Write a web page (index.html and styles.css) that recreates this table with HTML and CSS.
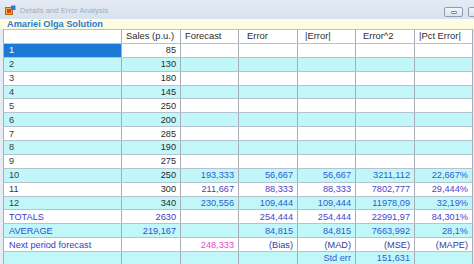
FILE: index.html
```html
<!DOCTYPE html>
<html>
<head>
<meta charset="utf-8">
<link rel="stylesheet" href="styles.css">
</head>
<body>
<div class="window">
  <div class="titlebar">
    <svg class="appicon" width="11" height="10" viewBox="0 0 11 10">
      <rect x="0.5" y="2.5" width="7" height="7" fill="#f0b040" stroke="#b06a10"/>
      <rect x="2" y="4" width="4" height="4" fill="#e04020"/>
      <rect x="6" y="0.5" width="4.5" height="4.5" fill="#3a78d0"/>
    </svg>
    <span class="title">Details and Error Analysis</span>
    <div class="winbtns">
      <div class="wbtn"><span class="dash"></span></div>
      <div class="wbtn"></div>
    </div>
  </div>
  <div class="label">Amariei Olga Solution</div>
  <table class="grid">
    <colgroup>
      <col class="c0"><col class="c1"><col class="c2"><col class="c3"><col class="c4"><col class="c5"><col class="c6">
    </colgroup>
    <thead>
      <tr class="head">
        <th></th>
        <th class="r">Sales (p.u.)</th>
        <th class="l4">Forecast</th>
        <th class="l8">Error</th>
        <th class="l7">|Error|</th>
        <th class="l7">Error^2</th>
        <th class="l4">|Pct Error|</th>
      </tr>
    </thead>
    <tbody>
      <tr class="w"><td class="rh sel">1</td><td class="n">85</td><td></td><td></td><td></td><td></td><td></td></tr>
      <tr class="c"><td class="rh">2</td><td class="n">130</td><td></td><td></td><td></td><td></td><td></td></tr>
      <tr class="w"><td class="rh">3</td><td class="n">180</td><td></td><td></td><td></td><td></td><td></td></tr>
      <tr class="c"><td class="rh">4</td><td class="n">145</td><td></td><td></td><td></td><td></td><td></td></tr>
      <tr class="w"><td class="rh">5</td><td class="n">250</td><td></td><td></td><td></td><td></td><td></td></tr>
      <tr class="c"><td class="rh">6</td><td class="n">200</td><td></td><td></td><td></td><td></td><td></td></tr>
      <tr class="w"><td class="rh">7</td><td class="n">285</td><td></td><td></td><td></td><td></td><td></td></tr>
      <tr class="c"><td class="rh">8</td><td class="n">190</td><td></td><td></td><td></td><td></td><td></td></tr>
      <tr class="w"><td class="rh">9</td><td class="n">275</td><td></td><td></td><td></td><td></td><td></td></tr>
      <tr class="c"><td class="rh">10</td><td class="n">250</td><td class="n b">193,333</td><td class="n b">56,667</td><td class="n b">56,667</td><td class="n b">3211,112</td><td class="n b">22,667%</td></tr>
      <tr class="w"><td class="rh">11</td><td class="n">300</td><td class="n p">211,667</td><td class="n p">88,333</td><td class="n p">88,333</td><td class="n p">7802,777</td><td class="n p">29,444%</td></tr>
      <tr class="c"><td class="rh">12</td><td class="n">340</td><td class="n b">230,556</td><td class="n b">109,444</td><td class="n b">109,444</td><td class="n b">11978,09</td><td class="n b">32,19%</td></tr>
      <tr class="w"><td class="rh s">TOTALS</td><td class="n s">2630</td><td></td><td class="n p">254,444</td><td class="n p">254,444</td><td class="n p">22991,97</td><td class="n p">84,301%</td></tr>
      <tr class="c"><td class="rh s2">AVERAGE</td><td class="n s2">219,167</td><td></td><td class="n b">84,815</td><td class="n b">84,815</td><td class="n b">7663,992</td><td class="n b">28,1%</td></tr>
      <tr class="w"><td class="rh s">Next period forecast</td><td></td><td class="n pink">248,333</td><td class="n d">(Bias)</td><td class="n d">(MAD)</td><td class="n d">(MSE)</td><td class="n d">(MAPE)</td></tr>
      <tr class="c"><td class="rh"></td><td></td><td></td><td></td><td class="n b">Std err</td><td class="n b">151,631</td><td></td></tr>
    </tbody>
  </table>
</div>
</body>
</html>
```
FILE: styles.css
```css
html, body {
  margin: 0;
  padding: 0;
}
body {
  width: 474px;
  height: 264px;
  overflow: hidden;
  background: #e6ecf3;
  font-family: "Liberation Sans", Arial, sans-serif;
}
.window {
  display: flex;
  flex-direction: column;
  height: 264px;
}
.titlebar {
  height: 19px;
  flex: none;
  display: flex;
  align-items: center;
  background: linear-gradient(#e4ebf4, #d8e2ee);
  padding-left: 5px;
  box-sizing: border-box;
}
.appicon {
  flex: none;
  margin-top: 1px;
}
.title {
  margin-left: 4px;
  font-size: 7.6px;
  color: #a3acbb;
  letter-spacing: 0.05px;
  margin-top: 1px;
}
.winbtns {
  margin-left: auto;
  display: flex;
  gap: 5px;
  align-self: flex-start;
  margin-top: 7px;
  margin-right: -13px;
}
.wbtn {
  width: 17px;
  height: 8px;
  border: 1px solid #8e9db4;
  border-radius: 2px;
  background: linear-gradient(#f2f5fa, #dbe3ee);
  display: flex;
  align-items: center;
  justify-content: center;
}
.dash {
  width: 6px;
  height: 3px;
  background: #fff;
  border: 1px solid #7a889c;
  border-radius: 1px;
  box-sizing: border-box;
}
.label {
  height: 10px;
  flex: none;
  background: linear-gradient(#fdfde6, #fbfbdc);
  color: #2c7ad0;
  font-weight: bold;
  font-size: 9.2px;
  line-height: 10px;
  padding-left: 7px;
}
.grid {
  border-collapse: collapse;
  table-layout: fixed;
  width: 469px;
  margin-left: 3px;
  font-size: 9.2px;
  color: #2a2a2a;
  background: #fff;
}
.c0 { width: 118px; }
.c1 { width: 59px; }
.c2 { width: 58px; }
.c3 { width: 59px; }
.c4 { width: 58px; }
.c5 { width: 59px; }
.c6 { width: 58px; }
.grid th, .grid td {
  height: 12.875px;
  padding: 0 4px 0 4px;
  border-top: 1px solid #b6c2ce;
  border-bottom: 1px solid #b6c2ce;
  border-left: 1px solid #a6adb6;
  border-right: 1px solid #a6adb6;
  white-space: nowrap;
  overflow: hidden;
  line-height: 12px;
}
.grid th {
  font-weight: normal;
  color: #2c2c2c;
  text-align: left;
  background: #fff;
  font-size: 9.4px;
}
.grid th.r { text-align: right; padding-right: 6px; }
.grid th.l4 { padding-left: 4px; }
.grid th.l8 { padding-left: 8px; }
.grid th.l7 { padding-left: 7px; }
tr.w td { background: #ffffff; }
tr.c td { background: #c2f7fa; }
td.rh {
  text-align: left;
  padding-left: 5px;
  color: #3a3a3a;
}
tr.w td.sel {
  background: #1b7ad6;
  color: #fff;
}
td.n { text-align: right; padding-right: 4px; }
td.b { color: #2d5bd4; }
td.p { color: #4a44cc; }
td.s { color: #3b3bc4; }
td.s2 { color: #2f4fd0; }
td.pink { color: #ea48cb; }
td.d { color: #323f9a; }
```
